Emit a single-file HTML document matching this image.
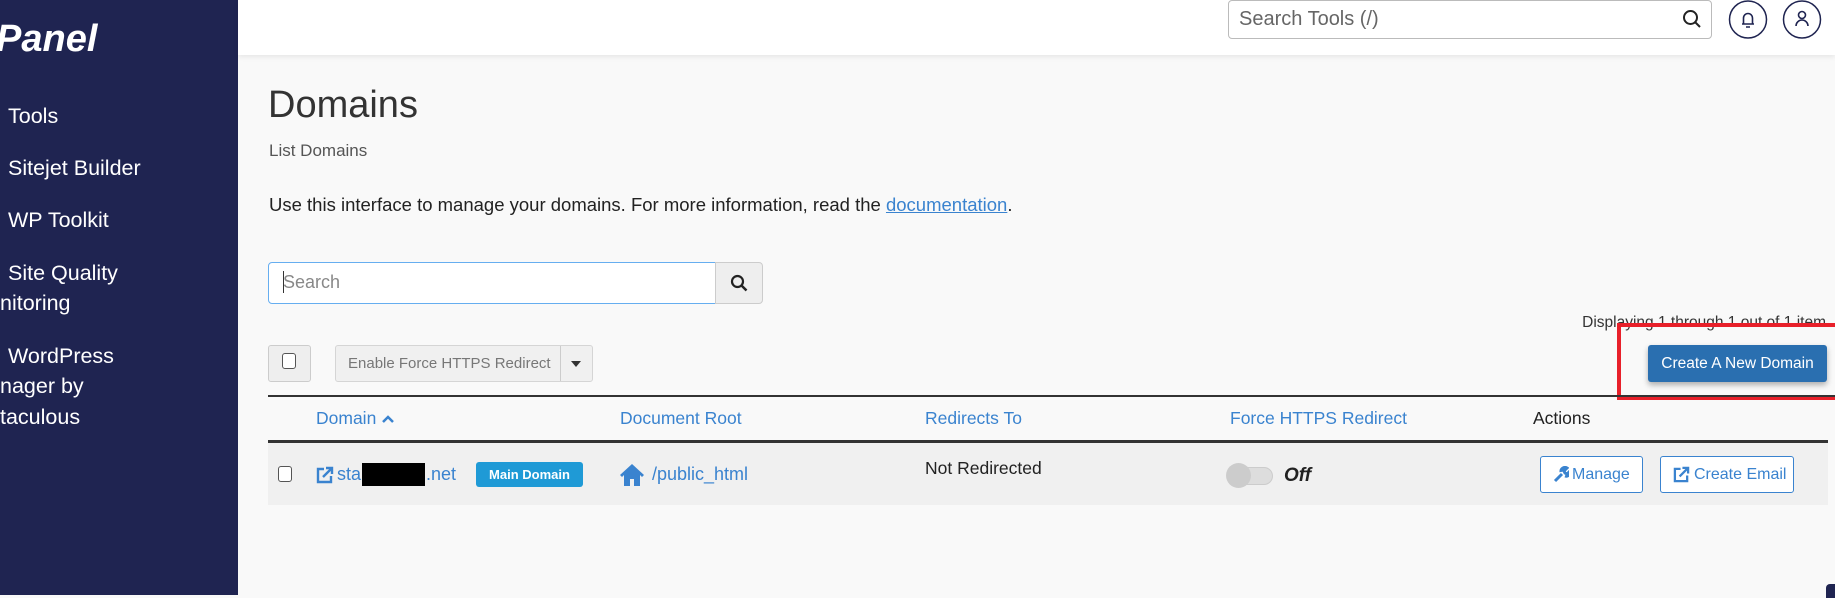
<!DOCTYPE html>
<html><head><meta charset="utf-8"><style>
*{box-sizing:border-box;margin:0;padding:0}
body{width:1835px;height:595px;overflow:hidden;background:#f9f9f9;font-family:"Liberation Sans",sans-serif;position:relative;color:#333}
.a{position:absolute;white-space:nowrap}
#side{position:absolute;left:0;top:0;width:238px;height:595px;background:#1f2451}
.si{position:absolute;left:8px;color:#fff;font-size:21.5px}
#hdr{position:absolute;left:238px;top:0;right:0;height:55px;background:#fff;box-shadow:0 2px 5px rgba(0,0,0,.08)}
.lnk{color:#3a83cf}
.btn{position:absolute;border:1px solid #ccc;border-radius:3px;background:#eee}
</style></head><body>
<div id="side">
<div class="a" style="left:-4px;top:18px;color:#fff;font-size:38px;font-weight:bold;font-style:italic;letter-spacing:0px">Panel</div>
<div class="si" style="top:104px">Tools</div>
<div class="si" style="top:156px">Sitejet Builder</div>
<div class="si" style="top:208px">WP Toolkit</div>
<div class="si" style="top:261px">Site Quality</div>
<div class="si" style="top:291px;left:0">nitoring</div>
<div class="si" style="top:344px">WordPress</div>
<div class="si" style="top:374px;left:0">nager by</div>
<div class="si" style="top:405px;left:0">taculous</div>
</div>
<div id="hdr"></div>
<div class="a" style="left:1228px;top:0;width:484px;height:39px;border:1px solid #bbb;border-radius:4px;background:#fff"></div>
<div class="a" style="left:1239px;top:8px;font-size:20px;color:#666">Search Tools (/)</div>
<svg class="a" style="left:1682px;top:9px" width="20" height="20" viewBox="0 0 20 20"><circle cx="8.5" cy="8.5" r="6.5" fill="none" stroke="#222" stroke-width="2"/><path d="M13 13l5 5" stroke="#222" stroke-width="2"/></svg>
<svg class="a" style="left:1728px;top:0" width="40" height="40" viewBox="0 0 40 40"><circle cx="20" cy="19.5" r="18.5" fill="none" stroke="#1f2451" stroke-width="1.5"/><path d="M14 24h12M15.5 24v-6a4.5 4.5 0 0 1 9 0v6M18 27h4" fill="none" stroke="#1f2451" stroke-width="1.6"/></svg>
<svg class="a" style="left:1782px;top:0" width="40" height="40" viewBox="0 0 40 40"><circle cx="20" cy="19.5" r="18.5" fill="none" stroke="#1f2451" stroke-width="1.5"/><circle cx="20" cy="15" r="3.5" fill="none" stroke="#1f2451" stroke-width="1.6"/><path d="M14 26a6 6 0 0 1 12 0" fill="none" stroke="#1f2451" stroke-width="1.6"/></svg>

<div class="a" style="left:268px;top:84px;font-size:38px;color:#333">Domains</div>
<div class="a" style="left:269px;top:141px;font-size:17px;color:#555">List Domains</div>
<div class="a" style="left:269px;top:194px;font-size:18.5px;color:#222">Use this interface to manage your domains. For more information, read the <span class="lnk" style="text-decoration:underline">documentation</span>.</div>

<div class="a" style="left:268px;top:262px;width:448px;height:42px;border:1px solid #66aef0;border-radius:4px 0 0 4px;background:#fff"></div>
<div class="a" style="left:283px;top:272px;font-size:18px;color:#888">Search</div>
<div class="a" style="left:283px;top:271px;width:1px;height:22px;background:#333"></div>
<div class="btn" style="left:715px;top:262px;width:48px;height:42px;border-radius:0 4px 4px 0"></div>
<svg class="a" style="left:730px;top:274px" width="18" height="18" viewBox="0 0 18 18"><circle cx="7.5" cy="7.5" r="5.5" fill="none" stroke="#222" stroke-width="2.2"/><path d="M11.5 11.5l5 5" stroke="#222" stroke-width="2.5"/></svg>

<div class="a" style="right:9px;top:314px;font-size:15.5px;color:#333">Displaying 1 through 1 out of 1 item</div>

<div class="btn" style="left:268px;top:345px;width:43px;height:37px"></div>
<div class="a" style="left:282px;top:353px;width:14px;height:16px;border:1.5px solid #555;border-radius:3px;background:#fff"></div>
<div class="btn" style="left:335px;top:345px;width:258px;height:37px;background:#f0f0f0;border-color:#d5d5d5"></div>
<div class="a" style="left:348px;top:355px;font-size:15px;color:#777">Enable Force HTTPS Redirect</div>
<div class="a" style="left:560px;top:346px;width:1px;height:35px;background:#ccc"></div>
<div class="a" style="left:571px;top:361px;border-left:5px solid transparent;border-right:5px solid transparent;border-top:6px solid #333"></div>

<div class="a" style="left:1617px;top:323px;width:225px;height:77px;border:4px solid #e8202a"></div>
<div class="a" style="left:1648px;top:345px;width:179px;height:37px;background:#2a6fb0;border-radius:3px;box-shadow:0 3px 6px rgba(0,0,0,.3);color:#fff;font-size:15.5px;text-align:center;line-height:38px">Create A New Domain</div>

<div class="a" style="left:268px;top:395px;width:1567px;height:2px;background:#333"></div>
<div class="a lnk" style="left:316px;top:408px;font-size:17.5px">Domain <svg width="14" height="10" viewBox="0 0 14 10"><path d="M2 8l5-5 5 5" fill="none" stroke="#3a83cf" stroke-width="2.5"/></svg></div>
<div class="a lnk" style="left:620px;top:408px;font-size:17.5px">Document Root</div>
<div class="a lnk" style="left:925px;top:408px;font-size:17.5px">Redirects To</div>
<div class="a lnk" style="left:1230px;top:408px;font-size:17.5px">Force HTTPS Redirect</div>
<div class="a" style="left:1533px;top:408px;font-size:17.5px;color:#222">Actions</div>
<div class="a" style="left:268px;top:440px;width:1560px;height:3px;background:#333"></div>
<div class="a" style="left:268px;top:443px;width:1560px;height:62px;background:#f0f0f0"></div>

<div class="a" style="left:278px;top:466px;width:14px;height:16px;border:1.5px solid #555;border-radius:3px;background:#fff"></div>
<svg class="a" style="left:316px;top:466px" width="18" height="18" viewBox="0 0 18 18"><path d="M8 3H2v13h13v-6" fill="none" stroke="#3a83cf" stroke-width="2.4"/><path d="M7 11l8-8M10 2h6v6" fill="none" stroke="#3a83cf" stroke-width="2.4"/></svg>
<div class="a lnk" style="left:337px;top:464px;font-size:18px">sta</div>
<div class="a" style="left:362px;top:463px;width:63px;height:23px;background:#000"></div>
<div class="a lnk" style="left:426px;top:464px;font-size:18px">.net</div>
<div class="a" style="left:476px;top:462px;width:107px;height:25px;background:#1f9ad6;border-radius:3px;color:#fff;font-size:13px;font-weight:bold;text-align:center;line-height:25px">Main Domain</div>
<svg class="a" style="left:619px;top:463px" width="26" height="24" viewBox="0 0 26 24"><path d="M13 1L1 12l2 2 2-2v11h6v-7h4v7h6V12l2 2 2-2z" fill="#3a83cf"/></svg>
<div class="a lnk" style="left:652px;top:464px;font-size:18px">/public_html</div>
<div class="a" style="left:925px;top:458px;font-size:17.5px;color:#222">Not Redirected</div>
<div class="a" style="left:1233px;top:467px;width:40px;height:18px;background:#ddd;border:1px solid #ccc;border-radius:9px"></div>
<div class="a" style="left:1226px;top:463px;width:25px;height:25px;background:#ccc;border-radius:50%"></div>
<div class="a" style="left:1284px;top:465px;font-size:19px;font-weight:bold;font-style:italic;color:#222">Off</div>
<div class="a" style="left:1540px;top:456px;width:103px;height:37px;border:1px solid #3a83cf;border-radius:3px;background:#fff"></div>
<svg class="a" style="left:1553px;top:466px" width="16" height="17" viewBox="0 0 16 17"><path d="M2 15l7-7M8 6a4 4 0 0 1 6-4l-3 3 1 2 2 1 3-3a4 4 0 0 1-5 5" fill="none" stroke="#3a83cf" stroke-width="3"/></svg>
<div class="a lnk" style="left:1572px;top:466px;font-size:16px">Manage</div>
<div class="a" style="left:1660px;top:456px;width:134px;height:37px;border:1px solid #3a83cf;border-radius:3px;background:#fff"></div>
<svg class="a" style="left:1673px;top:466px" width="17" height="17" viewBox="0 0 18 18"><path d="M8 3H2v13h13v-6" fill="none" stroke="#3a83cf" stroke-width="2.4"/><path d="M7 11l8-8M10 2h6v6" fill="none" stroke="#3a83cf" stroke-width="2.4"/></svg>
<div class="a lnk" style="left:1694px;top:466px;font-size:16px">Create Email</div>
<div class="a" style="left:1826px;top:584px;width:12px;height:14px;background:#1f2451;border-radius:4px 0 0 0"></div>
</body></html>
